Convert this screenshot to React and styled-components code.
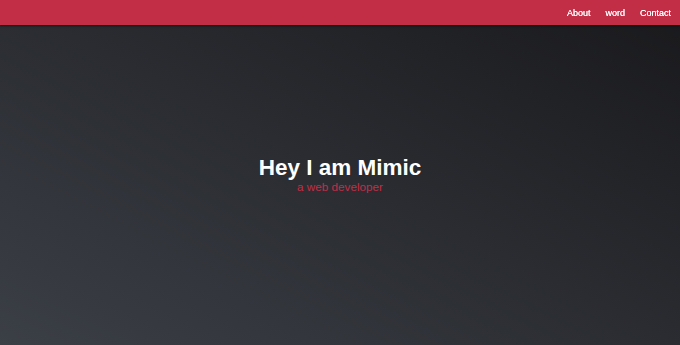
import React from 'react';
import styled, { createGlobalStyle } from 'styled-components';

const GlobalStyle = createGlobalStyle`
  html, body {
    margin: 0;
    padding: 0;
    font-family: "Liberation Sans", Arial, sans-serif;
    background: #1b1b1e;
  }
`;

const NavBar = styled.nav`
  position: fixed;
  top: 0;
  left: 0;
  right: 0;
  height: 25px;
  background: #c22e45;
  display: flex;
  justify-content: flex-end;
  align-items: center;
  padding-right: 9px;
  gap: 15px;
  box-shadow: 0 1px 2px rgba(0, 0, 0, 0.6);
  z-index: 2;
`;

const NavLink = styled.a`
  color: #fff;
  font-size: 9px;
  line-height: 10px;
  text-decoration: none;
  text-shadow: 0 0 0.4px #fff;
`;

const Hero = styled.header`
  box-sizing: border-box;
  height: 100vh;
  padding-top: 4px;
  background: linear-gradient(to top right, #3b3f46 0%, #2a2c31 50%, #19191c 100%);
  display: flex;
  flex-direction: column;
  justify-content: center;
  align-items: center;
`;

const Title = styled.h1`
  margin: 0;
  color: #fff;
  font-size: 22.5px;
  font-weight: 700;
  line-height: 24px;
`;

const Subtitle = styled.p`
  margin: 0;
  color: #c22e45;
  font-size: 11.7px;
  line-height: 14px;
`;

export default function App() {
  return (
    <>
      <GlobalStyle />
      <NavBar>
        <NavLink href="#about">About</NavLink>
        <NavLink href="#word">word</NavLink>
        <NavLink href="#contact">Contact</NavLink>
      </NavBar>
      <Hero>
        <Title>Hey I am Mimic</Title>
        <Subtitle>a web developer</Subtitle>
      </Hero>
    </>
  );
}
